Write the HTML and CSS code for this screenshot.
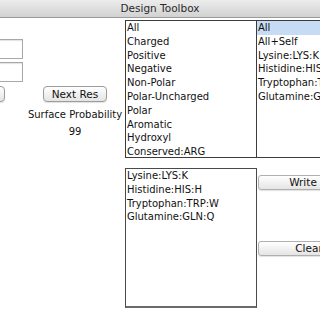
FILE: index.html
```html
<!DOCTYPE html>
<html lang="en">
<head>
    <meta charset="UTF-8">
    <title>Design Toolbox</title>
    <link rel="stylesheet" href="styles.css">
</head>
<body>
    <div class="window">
        <div class="titlebar">Design Toolbox</div>
        <div class="layout">
            <div class="controls">
                <input class="field" type="text">
                <input class="field" type="text">
                <div class="control-row">
                    <button class="button button-cut"></button>
                    <div class="readout">
                        <button class="button next-button">Next Res</button>
                        <div class="readout-label">Surface Probability</div>
                        <div class="readout-value">99</div>
                    </div>
                </div>
            </div>

            <ul class="list list-groups">
                <li>All</li>
                <li>Charged</li>
                <li>Positive</li>
                <li>Negative</li>
                <li>Non-Polar</li>
                <li>Polar-Uncharged</li>
                <li>Polar</li>
                <li>Aromatic</li>
                <li>Hydroxyl</li>
                <li>Conserved:ARG</li>
            </ul>

            <ul class="list list-targets">
                <li class="selected">All</li>
                <li>All+Self</li>
                <li>Lysine:LYS:K</li>
                <li>Histidine:HIS:H</li>
                <li>Tryptophan:TRP:W</li>
                <li>Glutamine:GLN:Q</li>
            </ul>

            <ul class="list list-chosen">
                <li>Lysine:LYS:K</li>
                <li>Histidine:HIS:H</li>
                <li>Tryptophan:TRP:W</li>
                <li>Glutamine:GLN:Q</li>
            </ul>

            <div class="actions">
                <button class="button action-button">Write</button>
                <button class="button action-button clear-button">Clear</button>
            </div>
        </div>
    </div>
</body>
</html>
```

FILE: styles.css
```css
* {
    margin: 0;
    padding: 0;
    box-sizing: border-box;
}

body {
    font-family: "DejaVu Sans", Verdana, sans-serif;
    font-size: 10px;
    color: #111;
    background: #fff;
    width: 320px;
    height: 320px;
    overflow: hidden;
}

.window {
    width: 320px;
    height: 320px;
    overflow: hidden;
}

.titlebar {
    height: 18px;
    line-height: 17px;
    text-align: center;
    font-size: 10.5px;
    color: #2a2a2a;
    background: linear-gradient(to bottom, #ececec, #d2d2d2);
    border-bottom: 1px solid #9a9a9a;
}

.layout {
    display: grid;
    grid-template-columns: 125px 132px 1fr;
    row-gap: 10px;
    margin-top: 2px;
}

/* left side controls */
.controls {
    display: flex;
    flex-direction: column;
}

.field {
    display: block;
    margin-left: -60px;
    width: 83px;
    height: 20px;
    border: 1px solid #a8a8a8;
    box-shadow: inset 0 1px 1px rgba(0, 0, 0, 0.12);
    background: #fff;
    font: inherit;
}

.field:first-child {
    margin-top: 19px;
}

.field + .field {
    margin-top: 3px;
}

.control-row {
    display: flex;
    align-items: flex-start;
    margin-top: 4px;
}

.button {
    font-family: inherit;
    font-size: 10.5px;
    color: #111;
    height: 16px;
    line-height: 14px;
    border: 1px solid #9c9c9c;
    border-radius: 4px;
    background: linear-gradient(to bottom, #ffffff, #e4e4e4);
    box-shadow: 0 1px 1px rgba(0, 0, 0, 0.12);
}

.button-cut {
    margin-left: -60px;
    width: 65px;
}

.readout {
    margin-left: 20px;
    width: 100px;
    display: flex;
    flex-direction: column;
    align-items: center;
}

.next-button {
    width: 64px;
}

.readout-label {
    margin-top: 6px;
    line-height: 14px;
    white-space: nowrap;
}

.readout-value {
    margin-top: 3px;
    line-height: 14px;
}

/* lists */
.list {
    list-style: none;
    border: 1px solid #3c3c3c;
    background: #fff;
    overflow: hidden;
}

.list li {
    line-height: 13.8px;
    padding-left: 1px;
    white-space: nowrap;
}

.list-groups {
    height: 138px;
}

.list-targets {
    height: 138px;
    margin-left: -1px;
    border-right: none;
}

.list-targets .selected {
    background: #c6dbf4;
}

.list-chosen {
    grid-column: 2;
    height: 140px;
    border-color: #4a4a4a;
    border-bottom: 2px solid #6a6a6a;
}

.actions {
    display: flex;
    flex-direction: column;
    align-items: flex-start;
    margin-left: 1px;
}

.action-button {
    width: 90px;
    height: 15px;
    line-height: 13px;
    margin-top: 7px;
    border-radius: 3px;
    border-color: #b0b0b0;
}

.clear-button {
    width: 102px;
    margin-top: 51px;
}
```
